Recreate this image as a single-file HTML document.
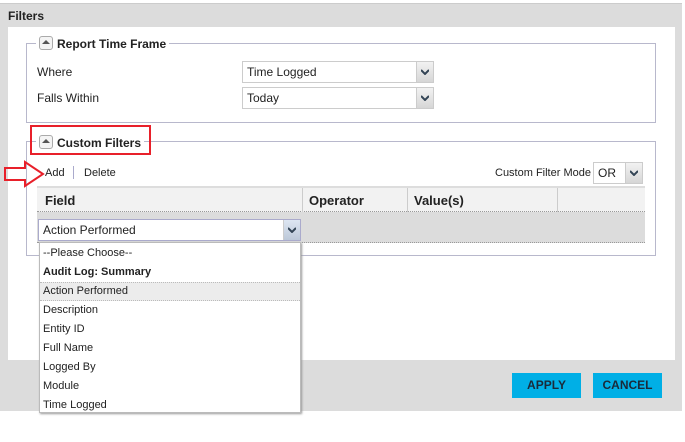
<!DOCTYPE html><html><head><style>
body{margin:0;width:685px;height:442px;background:#fff;position:relative;overflow:hidden;font-family:"Liberation Sans",sans-serif;font-size:12px;color:#222}
.a{position:absolute}
.sel{position:absolute;background:#fff;border:1px solid #ccc;box-sizing:border-box;font-size:12px;line-height:20px;padding-left:4px}
.btn{position:absolute;right:0;top:0;bottom:0;width:16px;background:linear-gradient(#f2f2f2,#d6d6d6);border-left:1px solid #ccc}
.btn svg{position:absolute;left:4px;top:7px}
.leg{position:absolute;background:#fff;font-weight:bold;font-size:12px;padding:0 3px}
.tog{display:inline-block;width:12px;height:12px;border:1px solid #aaa;border-radius:3px;background:#f4f4f4;vertical-align:-2px;margin-right:4px;position:relative}
.tog:after{content:"";position:absolute;left:2px;top:3px;border:4px solid transparent;border-bottom:4px solid #555;border-top:0}
.opt{height:19px;line-height:19px;padding-left:3px;font-size:11px}
</style></head><body>
<div class="a" style="left:0;top:3px;width:682px;height:407px;background:#dcdcdc;border-top:1px solid #ccc"></div>
<div class="a" style="left:8px;top:9px;font-weight:bold;font-size:12px">Filters</div>
<div class="a" style="left:8px;top:27px;width:667px;height:333px;background:#fff"></div>
<div class="a" style="left:26px;top:43px;width:630px;height:80px;border:1px solid #b8b8cc;box-sizing:border-box"></div>
<div class="leg" style="left:36px;top:36px"><span class="tog"></span>Report Time Frame</div>
<div class="a" style="left:37px;top:65px">Where</div>
<div class="a" style="left:37px;top:91px">Falls Within</div>
<div class="sel" style="left:242px;top:61px;width:192px;height:22px">Time Logged<div class="btn"><svg width="8" height="6"><path d="M0 1L4 5L8 1" stroke="#345" stroke-width="2" fill="none"/></svg></div></div>
<div class="sel" style="left:242px;top:87px;width:192px;height:22px">Today<div class="btn"><svg width="8" height="6"><path d="M0 1L4 5L8 1" stroke="#345" stroke-width="2" fill="none"/></svg></div></div>
<div class="a" style="left:26px;top:141px;width:630px;height:115px;border:1px solid #b8b8cc;box-sizing:border-box"></div>
<div class="leg" style="left:36px;top:135px"><span class="tog"></span>Custom Filters</div>
<div class="a" style="left:30px;top:125px;width:121px;height:30px;border:2px solid #e8202a;box-sizing:border-box"></div>
<svg class="a" style="left:3px;top:160px" width="44" height="28"><path d="M2 8H22V2L40 14L22 26V20H2Z" fill="none" stroke="#e8202a" stroke-width="2"/></svg>
<div class="a" style="left:45px;top:167px;font-size:11px">Add</div>
<div class="a" style="left:73px;top:166px;width:1px;height:13px;background:#aac"></div>
<div class="a" style="left:84px;top:167px;font-size:11px">Delete</div>
<div class="a" style="left:495px;top:167px;font-size:11px">Custom Filter Mode</div>
<div class="sel" style="left:593px;top:162px;width:50px;height:22px">OR<div class="btn"><svg width="8" height="6"><path d="M0 1L4 5L8 1" stroke="#345" stroke-width="2" fill="none"/></svg></div></div>
<div class="a" style="left:37px;top:186px;width:608px;height:26px;background:#f2f2f2;border-top:2px solid #ddd;border-bottom:1px dotted #999;box-sizing:border-box"></div>
<div class="a" style="left:45px;top:193px;font-weight:bold;font-size:13px">Field</div>
<div class="a" style="left:302px;top:188px;width:1px;height:24px;background:#ccc"></div>
<div class="a" style="left:309px;top:193px;font-weight:bold;font-size:13px">Operator</div>
<div class="a" style="left:407px;top:188px;width:1px;height:24px;background:#ccc"></div>
<div class="a" style="left:414px;top:193px;font-weight:bold;font-size:13px">Value(s)</div>
<div class="a" style="left:557px;top:188px;width:1px;height:24px;background:#ccc"></div>
<div class="a" style="left:37px;top:212px;width:608px;height:31px;background:#dcdcdc;border-bottom:1px dotted #999;box-sizing:border-box"></div>
<div class="sel" style="left:38px;top:219px;width:263px;height:22px;border-color:#aac">Action Performed<div class="btn" style="background:linear-gradient(#dde6f2,#bcc8d8)"><svg width="8" height="6"><path d="M0 1L4 5L8 1" stroke="#345" stroke-width="2" fill="none"/></svg></div></div>
<div class="a" style="left:39px;top:242px;width:262px;height:171px;background:#fff;border:1px solid #bbb;box-sizing:border-box;box-shadow:1px 1px 2px #999;padding-top:1px">
<div class="opt">--Please Choose--</div>
<div class="opt" style="font-weight:bold">Audit Log: Summary</div>
<div class="opt" style="background:#ececec;border-top:1px dotted #bbb;border-bottom:1px dotted #bbb;height:17px;line-height:17px">Action Performed</div>
<div class="opt">Description</div>
<div class="opt">Entity ID</div>
<div class="opt">Full Name</div>
<div class="opt">Logged By</div>
<div class="opt">Module</div>
<div class="opt">Time Logged</div>
</div>
<div class="a" style="left:512px;top:373px;width:69px;height:25px;background:#00afe6;color:#1a2a3a;text-align:center;line-height:25px;font-size:12px;font-weight:bold">APPLY</div>
<div class="a" style="left:593px;top:373px;width:69px;height:25px;background:#00afe6;color:#1a2a3a;text-align:center;line-height:25px;font-size:12px;font-weight:bold">CANCEL</div>
</body></html>
